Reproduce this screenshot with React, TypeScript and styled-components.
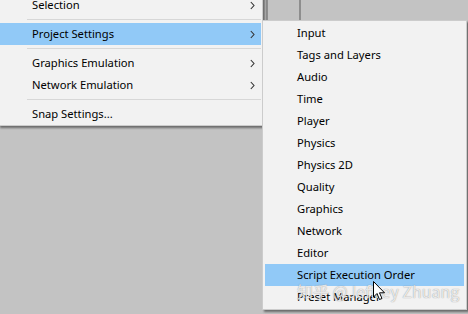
import React from "react";
import styled, { createGlobalStyle } from "styled-components";

const GlobalStyle = createGlobalStyle`
  html, body { margin: 0; padding: 0; }
  body { background: #c3c3c3; font-family: "Noto Sans", "Liberation Sans", sans-serif; }
`;

const Page = styled.div`
  position: relative;
  width: 468px;
  height: 314px;
  overflow: hidden;
  background-color: #c3c3c3;
  background-image: linear-gradient(
    to right,
    transparent 266px,
    #8e8e8e 266px,
    #8e8e8e 268px,
    transparent 268px,
    transparent 299px,
    #8e8e8e 299px,
    #8e8e8e 301px,
    transparent 301px
  );
  background-size: 100% 21px;
  background-repeat: no-repeat;
  display: flex;
  align-items: flex-start;
`;

const Menu = styled.div<{ $top: number; $left: number; $width: number }>`
  flex: none;
  box-sizing: border-box;
  width: ${(p) => p.$width}px;
  margin-top: ${(p) => p.$top}px;
  margin-left: ${(p) => p.$left}px;
  background: #f2f2f2;
  border: 1px solid #cccccc;
  padding: 1px 1px 0 1px;
  box-shadow: 2px 2px 2px rgba(0, 0, 0, 0.45);
  display: flex;
  flex-direction: column;
  position: relative;
`;

const SubMenu = styled(Menu)`
  padding: 1px 2px;
`;

const Item = styled.div<{ $active?: boolean }>`
  height: 22px;
  box-sizing: border-box;
  display: flex;
  align-items: center;
  padding: 0 6px 1px 32px;
  background: ${(p) => (p.$active ? "#91c9f7" : "transparent")};
  color: #000;
  font-size: 11.2px;
  white-space: nowrap;
`;

const Label = styled.span`
  flex: 1;
`;

const Separator = styled.div`
  height: 7px;
  display: flex;
  align-items: center;
  padding-left: 27px;
  &::after {
    content: "";
    flex: 1;
    height: 1px;
    background: #d7d7d7;
  }
`;

const Chevron = () => (
  <svg width="5" height="9" viewBox="0 0 5 9" style={{ marginTop: 1 }}>
    <path d="M0.8 1 L4 4.5 L0.8 8" fill="none" stroke="#333" strokeWidth="1.1" />
  </svg>
);

const Watermark = styled.div`
  position: absolute;
  left: 297px;
  top: 279px;
  font-family: "Noto Sans CJK SC", "Noto Sans", sans-serif;
  font-size: 16px;
  color: rgba(255, 255, 255, 0.78);
  text-shadow: 0 0 1px rgba(100, 100, 100, 0.75);
  white-space: nowrap;
  pointer-events: none;
`;

const Cursor = styled.svg`
  position: absolute;
  left: 373px;
  top: 281px;
`;

const subItems = [
  "Input",
  "Tags and Layers",
  "Audio",
  "Time",
  "Player",
  "Physics",
  "Physics 2D",
  "Quality",
  "Graphics",
  "Network",
  "Editor",
  "Script Execution Order",
  "Preset Manager",
];

export default function App() {
  return (
    <>
      <GlobalStyle />
      <Page>
        <Menu $top={-8} $left={-2} $width={265}>
          <Item>
            <Label>Selection</Label>
            <Chevron />
          </Item>
          <Separator />
          <Item $active>
            <Label>Project Settings</Label>
            <Chevron />
          </Item>
          <Separator />
          <Item>
            <Label>Graphics Emulation</Label>
            <Chevron />
          </Item>
          <Item>
            <Label>Network Emulation</Label>
            <Chevron />
          </Item>
          <Separator />
          <Item>
            <Label>Snap Settings...</Label>
          </Item>
        </Menu>
        <SubMenu $top={20} $left={-1} $width={205}>
          {subItems.map((s) => (
            <Item key={s} $active={s === "Script Execution Order"}>
              <Label>{s}</Label>
            </Item>
          ))}
        </SubMenu>
        <Watermark>知乎 @Jeffrey Zhuang</Watermark>
        <Cursor width="13" height="20" viewBox="0 0 13 20">
          <path
            d="M0.5 0.5 L0.5 16 L4 12.5 L6.5 18.5 L9 17.5 L6.5 11.8 L11.5 11.8 Z"
            fill="#fff"
            stroke="#000"
            strokeWidth="1"
            strokeLinejoin="miter"
          />
        </Cursor>
      </Page>
    </>
  );
}
